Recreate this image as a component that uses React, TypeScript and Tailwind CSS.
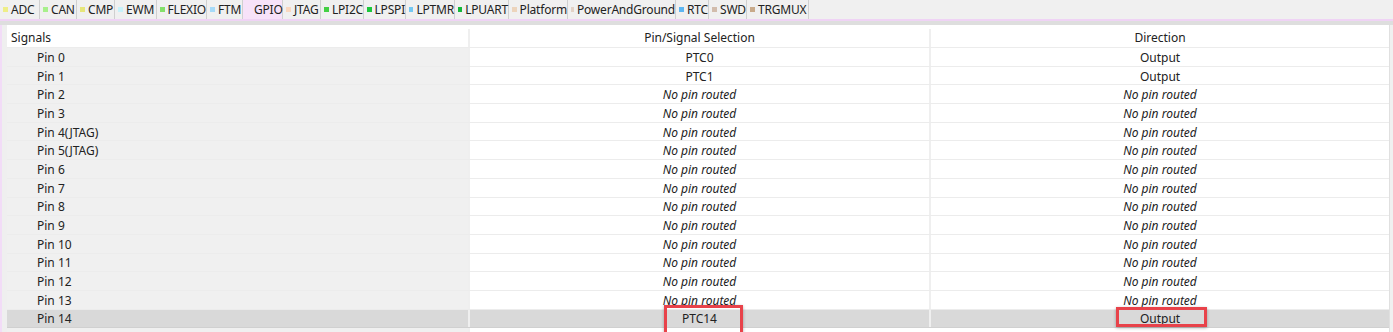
import React from 'react';

// ── Tab strip config ──────────────────────────────────────────────────────────

const TABS = [
  { label: 'ADC', w: 'w-[40px]', dot: 'bg-[#eeee88]' },
  { label: 'CAN', w: 'w-[37px]', dot: 'bg-[#a8f08c]' },
  { label: 'CMP', w: 'w-[38px]', dot: 'bg-[#e6e67a]' },
  { label: 'EWM', w: 'w-[42px]', dot: 'bg-[#c8f2fa]' },
  { label: 'FLEXIO', w: 'w-[50px]', dot: 'bg-[#84e06a]' },
  { label: 'FTM', w: 'w-[36px]', dot: 'bg-[#a6daf8]' },
  { label: 'GPIO', w: 'w-[40px]', dot: '', active: true },
  { label: 'JTAG', w: 'w-[38px]', dot: 'bg-[#fad8c0]' },
  { label: 'LPI2C', w: 'w-[43px]', dot: 'bg-[#44d044]' },
  { label: 'LPSPI', w: 'w-[42px]', dot: 'bg-[#1cc83c]' },
  { label: 'LPTMR', w: 'w-[49px]', dot: 'bg-[#74c8f2]' },
  { label: 'LPUART', w: 'w-[54px]', dot: 'bg-[#14b83a]' },
  { label: 'Platform', w: 'w-[59px]', dot: 'bg-[#ecd4bc]' },
  { label: 'PowerAndGround', w: 'w-[108px]', dot: 'bg-[#e2d2c6]' },
  { label: 'RTC', w: 'w-[33px]', dot: 'bg-[#5cb6f2]' },
  { label: 'SWD', w: 'w-[38px]', dot: 'bg-[#d2bcac]' },
  { label: 'TRGMUX', w: 'w-[62px]', dot: 'bg-[#c8aa8a]' },
];

// ── Table rows ────────────────────────────────────────────────────────────────

const ROWS = [
  { pin: 'Pin 0', sel: 'PTC0', dir: 'Output' },
  { pin: 'Pin 1', sel: 'PTC1', dir: 'Output' },
  { pin: 'Pin 2' },
  { pin: 'Pin 3' },
  { pin: 'Pin 4(JTAG)' },
  { pin: 'Pin 5(JTAG)' },
  { pin: 'Pin 6' },
  { pin: 'Pin 7' },
  { pin: 'Pin 8' },
  { pin: 'Pin 9' },
  { pin: 'Pin 10' },
  { pin: 'Pin 11' },
  { pin: 'Pin 12' },
  { pin: 'Pin 13' },
  { pin: 'Pin 14', sel: 'PTC14', dir: 'Output', selected: true },
];

function Cell({ value }: { value?: string }) {
  return value ? (
    <span>{value}</span>
  ) : (
    <span className="italic">No pin routed</span>
  );
}

export default function App() {
  return (
    <div
      className="w-[1393px] h-[332px] overflow-hidden bg-white text-[12px] text-[#222]"
      style={{ fontFamily: '"Noto Sans", "Open Sans", sans-serif' }}
    >
      {/* Tabs */}
      <div className="flex h-[19px] bg-[#f0f0f0] leading-[19px]">
        {TABS.map((t) => (
          <div
            key={t.label}
            className={`${t.w} shrink-0 flex items-center border-r border-[#d0d0d0] ${
              t.active ? 'bg-[#f7e2f9] pl-[11px]' : 'pl-[3px] gap-[3px]'
            }`}
          >
            {!t.active && <span className={`w-[5px] h-[5px] ${t.dot}`} />}
            <span className="whitespace-nowrap tracking-[-0.2px]">{t.label}</span>
          </div>
        ))}
        <div className="flex-1" />
      </div>
      <div className="h-[2px] bg-[#efd3f5]" />
      <div className="h-[4px] bg-[#dedede]" />

      {/* Body */}
      <div className="flex h-[307px]">
        <div className="w-[2px] bg-[#f2dcf7]" />
        <div className="w-[5px] bg-[#efefef]" />
        <div className="relative flex-1 flex flex-col">
          {/* Header */}
          <div className="flex h-[23px] shrink-0 items-center pt-[4px] border-b border-[#ececec]">
            <div className="w-[461px] pl-[4px]">Signals</div>
            <div className="w-[2px] self-stretch bg-[#efefef]" />
            <div className="w-[459px] text-center">Pin/Signal Selection</div>
            <div className="w-[2px] self-stretch bg-[#efefef]" />
            <div className="w-[458px] text-center">Direction</div>
          </div>

          {/* Rows */}
          {ROWS.map((r) => (
            <div
              key={r.pin}
              className={`flex h-[18.7px] shrink-0 items-center border-b leading-none ${
                r.selected ? 'bg-[#d9d9d9] border-[#d0d0d0]' : 'border-[#ececec]'
              }`}
            >
              <div
                className={`w-[461px] h-full flex items-center pl-[30px] pt-[2px] ${
                  r.selected ? '' : 'bg-[#f0f0f0]'
                }`}
              >
                {r.pin}
              </div>
              <div className="w-[2px] h-full bg-[#efefef]" />
              <div className="w-[459px] pt-[2px] text-center">
                <Cell value={r.sel} />
              </div>
              <div className="w-[2px] h-full bg-[#efefef]" />
              <div className="w-[458px] pt-[2px] text-center">
                <Cell value={r.dir} />
              </div>
            </div>
          ))}
          <div className="flex h-[18.7px] shrink-0">
            <div className="w-[461px] h-full bg-[#f0f0f0]" />
            <div className="w-[2px] h-full bg-[#efefef]" />
          </div>

          {/* Annotation boxes */}
          <div className="absolute left-[657px] top-[280px] w-[79px] h-[30px] border-[3px] border-[#e8424a] shadow-[0_1px_3px_rgba(0,0,0,0.3)]" />
          <div className="absolute left-[1109px] top-[282px] w-[91px] h-[20px] border-[3px] border-[#e8424a] shadow-[0_1px_3px_rgba(0,0,0,0.3)]" />
        </div>
        <div className="w-[4px] bg-[#f0f0f0] border-l border-[#e0e0e0]" />
      </div>
    </div>
  );
}
